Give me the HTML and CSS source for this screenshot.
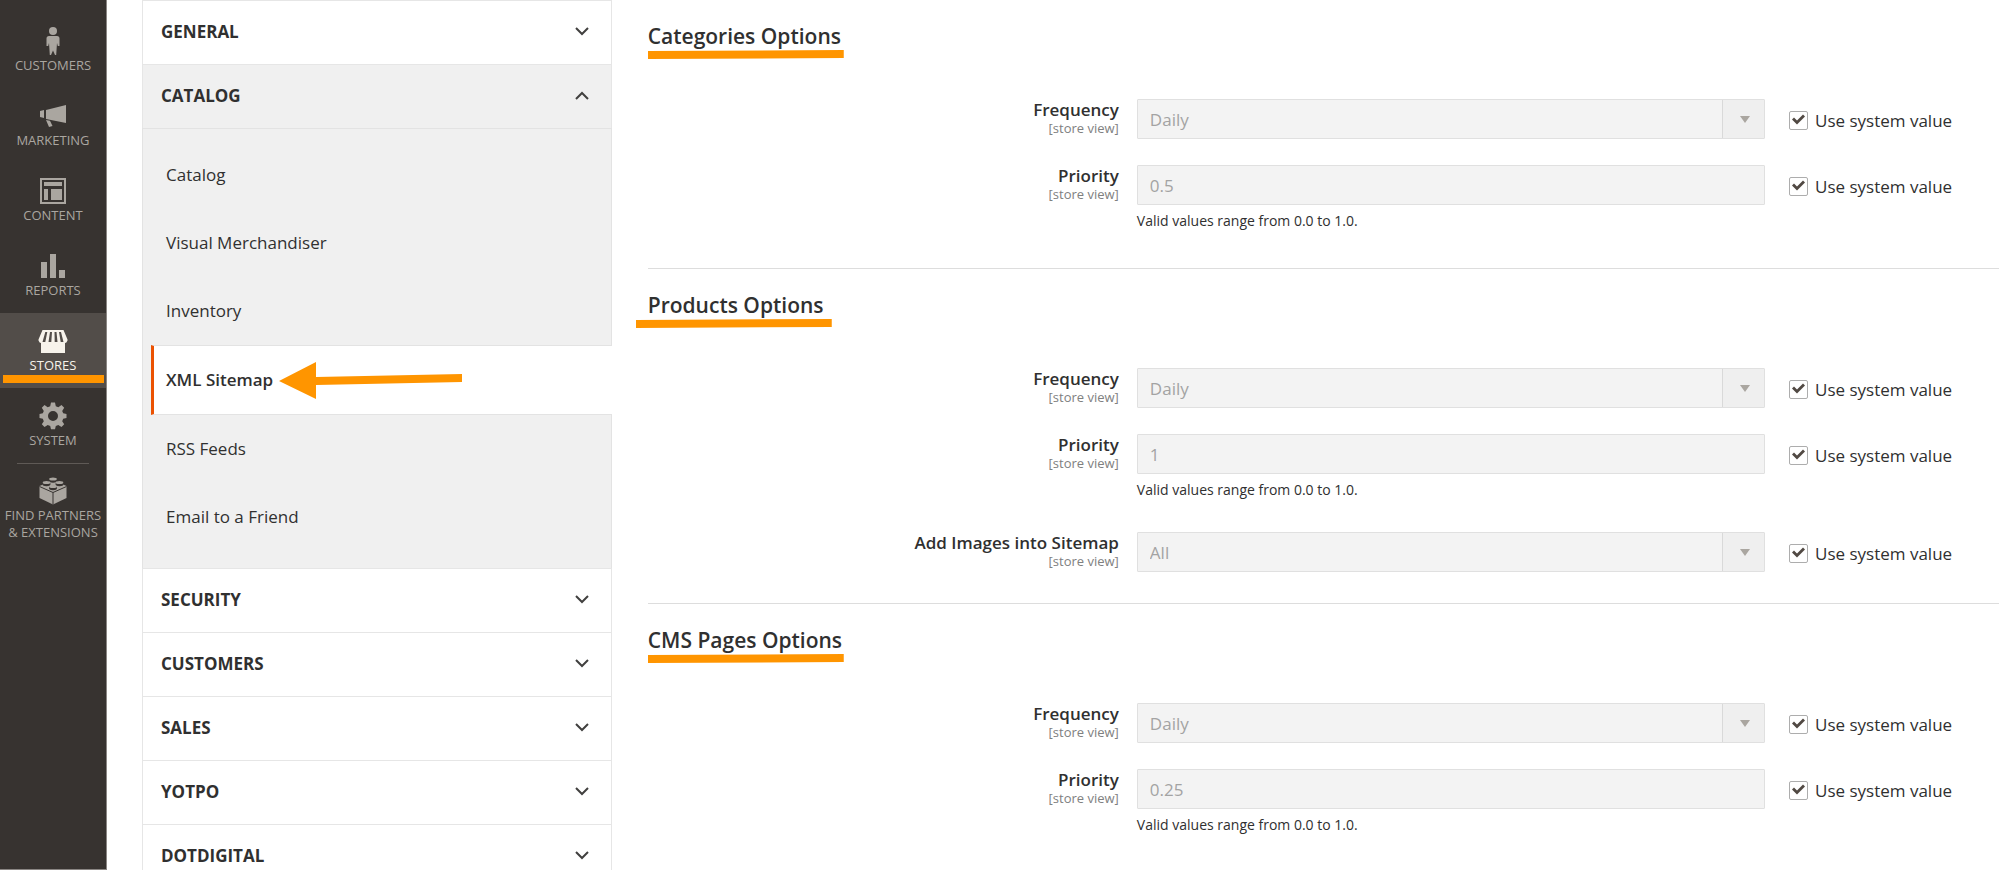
FILE: index.html
```html
<!DOCTYPE html>
<html lang="en">

<head>
    <meta charset="UTF-8">
    <meta name="viewport" content="width=device-width, initial-scale=1.0">
    <title>Configuration</title>
    <link rel="stylesheet" href="styles.css">
</head>

<body>
    <div class="page">
        <nav class="menu" aria-label="Main menu">
            <a href="#" class="menu-item">
                <svg class="menu-icon" width="28" height="28" viewBox="0 0 28 28">
                    <circle cx="14" cy="4" r="4" />
                    <path d="M10 9h8q2.500 0 2.500 2.500V19h-1.700l-.8-3-.8 12h-1.200L14 23.500 12 28h-1.200L10 16l-.8 3H7.500v-7.500Q7.500 9 10 9z" />
                </svg>
                <span>Customers</span>
            </a>
            <a href="#" class="menu-item">
                <svg class="menu-icon" width="28" height="28" viewBox="0 0 28 28">
                    <path d="M7 8 27 3v18L7 17zM1 9l4-1v8l-4-1zM7 18l4 .8L13.500 24l-3.500 1z" />
                </svg>
                <span>Marketing</span>
            </a>
            <a href="#" class="menu-item">
                <svg class="menu-icon" width="28" height="28" viewBox="0 0 28 28">
                    <path fill-rule="evenodd" d="M1 1h26v26H1zM3 3v22h22V3z" />
                    <path d="M5 5h18v4H5zM5 12h4v11H5zM12 12h11v11H12z" />
                </svg>
                <span>Content</span>
            </a>
            <a href="#" class="menu-item">
                <svg class="menu-icon" width="28" height="28" viewBox="0 0 28 28">
                    <path d="M2 10h6v16H2zM11 2h6v24h-6zM20 18h6v8h-6z" />
                </svg>
                <span>Reports</span>
            </a>
            <a href="#" class="menu-item active">
                <svg class="menu-icon" width="30" height="28" viewBox="0 0 30 28">
                    <path d="M4.500 3h21l4 9.500v1q-1 2.500-2.500 2.500V26H3V16Q1.500 16 .5 13.500v-1z" />
                    <path class="cut" d="M7.300 5h2L7.300 15H4.500zM12 5h2l-.7 10h-2.800zM16.500 5h2l1 10h-2.800zM21 5h2l2.500 10h-2.800z" />
                </svg>
                <span>Stores</span>
            </a>
            <a href="#" class="menu-item">
                <svg class="menu-icon" width="28" height="28" viewBox="0 0 28 28">
                    <path fill-rule="evenodd" d="M12 .5h4l.8 3.700 2.500 1L22.500 3l2.700 2.700-2 3.200 1 2.400 3.300.7v4l-3.300.7-1 2.500 2 3.100-2.700 2.700-3.200-2-2.500 1-.8 3.200h-4l-.8-3.200-2.500-1-3.200 2-2.700-2.700 2-3.100-1-2.500L.5 16v-4l3.300-.7 1-2.400-2-3.200L5.500 3l3.200 2.200 2.500-1zM14 9a5 5 0 1 0 0 10 5 5 0 0 0 0-10z" />
                </svg>
                <span>System</span>
            </a>
            <a href="#" class="menu-item partners">
                <svg class="menu-icon" width="28" height="28" viewBox="0 0 28 28">
                    <path d="M.5 9 14 3l13.500 6v12L14 27.500.5 21z" />
                    <path class="line" d="M.5 9.500 14 15.500l13.500-6M14 15.500v12" />
                    <g class="shade">
                        <ellipse cx="14" cy="3.500" rx="4" ry="2.200" />
                        <ellipse cx="7.500" cy="7" rx="4" ry="2.200" />
                        <ellipse cx="20.500" cy="7" rx="4" ry="2.200" />
                        <ellipse cx="14" cy="11" rx="4" ry="2.200" />
                    </g>
                    <ellipse cx="14" cy="2" rx="3.800" ry="1.500" />
                    <ellipse cx="7.500" cy="5.500" rx="3.800" ry="1.500" />
                    <ellipse cx="20.500" cy="5.500" rx="3.800" ry="1.500" />
                    <ellipse cx="14" cy="9.500" rx="3.800" ry="1.500" />
                </svg>
                <span>Find Partners<br>&amp; Extensions</span>
            </a>
        </nav>

        <nav class="config-nav" aria-label="Configuration">
            <button type="button" class="nav-title">General
                <svg width="14" height="9" viewBox="0 0 14 9"><path d="M1 1l6 6 6-6" /></svg>
            </button>
            <button type="button" class="nav-title open" aria-expanded="true">Catalog
                <svg width="14" height="9" viewBox="0 0 14 9"><path d="M1 8l6-6 6 6" /></svg>
            </button>
            <ul class="nav-items">
                <li><a href="#">Catalog</a></li>
                <li><a href="#">Visual Merchandiser</a></li>
                <li><a href="#">Inventory</a></li>
                <li class="current">
                    <a href="#">XML Sitemap</a>
                    <svg class="arrow" width="184" height="38" viewBox="0 0 184 38">
                        <path d="M0 19 37 0v15l146-3v8L37 23v14z" />
                    </svg>
                </li>
                <li><a href="#">RSS Feeds</a></li>
                <li><a href="#">Email to a Friend</a></li>
            </ul>
            <button type="button" class="nav-title">Security
                <svg width="14" height="9" viewBox="0 0 14 9"><path d="M1 1l6 6 6-6" /></svg>
            </button>
            <button type="button" class="nav-title">Customers
                <svg width="14" height="9" viewBox="0 0 14 9"><path d="M1 1l6 6 6-6" /></svg>
            </button>
            <button type="button" class="nav-title">Sales
                <svg width="14" height="9" viewBox="0 0 14 9"><path d="M1 1l6 6 6-6" /></svg>
            </button>
            <button type="button" class="nav-title">Yotpo
                <svg width="14" height="9" viewBox="0 0 14 9"><path d="M1 1l6 6 6-6" /></svg>
            </button>
            <button type="button" class="nav-title">Dotdigital
                <svg width="14" height="9" viewBox="0 0 14 9"><path d="M1 1l6 6 6-6" /></svg>
            </button>
        </nav>

        <main class="config">
            <section class="section">
                <h2>Categories Options</h2>
                <div class="row">
                    <label class="label" for="catFrequency">Frequency<span>[store view]</span></label>
                    <div class="select">
                        <select id="catFrequency" disabled><option>Daily</option></select>
                    </div>
                    <label class="default"><input type="checkbox" checked>Use system value</label>
                </div>
                <div class="row">
                    <label class="label" for="catPriority">Priority<span>[store view]</span></label>
                    <div>
                        <input type="text" id="catPriority" value="0.5" disabled>
                        <p class="note">Valid values range from 0.0 to 1.0.</p>
                    </div>
                    <label class="default"><input type="checkbox" checked>Use system value</label>
                </div>
            </section>

            <section class="section">
                <h2 class="wide">Products Options</h2>
                <div class="row">
                    <label class="label" for="prodFrequency">Frequency<span>[store view]</span></label>
                    <div class="select">
                        <select id="prodFrequency" disabled><option>Daily</option></select>
                    </div>
                    <label class="default"><input type="checkbox" checked>Use system value</label>
                </div>
                <div class="row">
                    <label class="label" for="prodPriority">Priority<span>[store view]</span></label>
                    <div>
                        <input type="text" id="prodPriority" value="1" disabled>
                        <p class="note">Valid values range from 0.0 to 1.0.</p>
                    </div>
                    <label class="default"><input type="checkbox" checked>Use system value</label>
                </div>
                <div class="row">
                    <label class="label" for="prodImages">Add Images into Sitemap<span>[store view]</span></label>
                    <div class="select">
                        <select id="prodImages" disabled><option>All</option></select>
                    </div>
                    <label class="default"><input type="checkbox" checked>Use system value</label>
                </div>
            </section>

            <section class="section">
                <h2>CMS Pages Options</h2>
                <div class="row">
                    <label class="label" for="cmsFrequency">Frequency<span>[store view]</span></label>
                    <div class="select">
                        <select id="cmsFrequency" disabled><option>Daily</option></select>
                    </div>
                    <label class="default"><input type="checkbox" checked>Use system value</label>
                </div>
                <div class="row">
                    <label class="label" for="cmsPriority">Priority<span>[store view]</span></label>
                    <div>
                        <input type="text" id="cmsPriority" value="0.25" disabled>
                        <p class="note">Valid values range from 0.0 to 1.0.</p>
                    </div>
                    <label class="default"><input type="checkbox" checked>Use system value</label>
                </div>
            </section>
        </main>
    </div>
</body>

</html>
```

FILE: styles.css
```css
* {
    box-sizing: border-box;
}

body {
    margin: 0;
    font-family: "Open Sans", "Noto Sans", sans-serif;
    font-size: 17px;
    color: #303030;
    background-color: #ffffff;
}

.page {
    display: flex;
    height: 100vh;
    overflow: hidden;
}

a {
    color: inherit;
    text-decoration: none;
}

/* Dark main menu */
.menu {
    flex: none;
    width: 107px;
    padding-top: 13px;
    background-color: #373330;
    border-right: 1px solid #8a8683;
    border-bottom: 1px solid #8a8683;
}

.menu-item {
    position: relative;
    display: flex;
    flex-direction: column;
    align-items: center;
    height: 75px;
    padding-top: 14px;
    font-size: 13px;
    line-height: 17px;
    text-align: center;
    text-transform: uppercase;
    white-space: nowrap;
    color: #aaa6a0;
}

.menu-icon {
    fill: currentColor;
    margin-bottom: 2px;
}

.menu-item.active {
    background-color: #524d49;
    color: #f7f3eb;
}

.menu-item.active::after {
    content: '';
    position: absolute;
    left: 3px;
    right: 2px;
    bottom: 5px;
    height: 8px;
    background-color: #ff9500;
}

.menu-icon .cut {
    fill: #524d49;
}

.menu-icon .line {
    fill: none;
    stroke: #373330;
    stroke-width: 1;
}

.menu-icon .shade {
    fill: #373330;
}

.menu-item.partners {
    height: auto;
}

.menu-item.partners::before {
    content: '';
    position: absolute;
    top: 0;
    left: 17px;
    right: 17px;
    height: 1px;
    background-color: #5f5a56;
}

/* Configuration sections */
.config-nav {
    flex: none;
    width: 23.5%;
    margin-left: 35px;
}

.nav-title {
    display: flex;
    align-items: center;
    justify-content: space-between;
    width: 100%;
    height: 64px;
    padding: 0 22px 2px 18px;
    border: 1px solid #e6e6e6;
    border-bottom: none;
    background-color: #ffffff;
    font-family: inherit;
    font-size: 17px;
    font-weight: 700;
    text-transform: uppercase;
    color: #303030;
    cursor: pointer;
}

.nav-title.open {
    background-color: #f0f0f0;
}

.nav-title svg {
    fill: none;
    stroke: #41403f;
    stroke-width: 2;
}

.nav-items {
    margin: 0;
    padding: 12px 0 17px 8px;
    list-style: none;
    background-color: #f0f0f0;
    border: 1px solid #e3e3e3;
    border-width: 1px 1px 0;
}

.nav-items li {
    position: relative;
    height: 68px;
    padding-left: 15px;
    line-height: 68px;
}

.nav-items .current {
    height: 70px;
    margin-right: -1px;
    padding-left: 12px;
    background-color: #ffffff;
    border: 1px solid #e3e3e3;
    border-left: 3px solid #eb5202;
    border-right: none;
    font-weight: 600;
}

.arrow {
    position: absolute;
    top: 16px;
    left: 125px;
    fill: #ff9500;
}

/* Settings form */
.config {
    flex: 1;
    min-width: 0;
    margin-left: 36px;
}

.section {
    padding: 22px 0 5px;
    border-top: 1px solid #dddddd;
}

.section:first-child {
    border-top: none;
}

h2 {
    position: relative;
    margin: 0 0 49px;
    font-size: 21px;
    font-weight: 600;
    line-height: 28px;
}

h2::after {
    content: '';
    position: absolute;
    top: 28px;
    left: 0;
    width: 196px;
    height: 9px;
    background-color: #ff9500;
    clip-path: polygon(0 1px, 100% 0, 100% 8px, 0 100%);
}

h2.wide::after {
    left: -12px;
}

.row {
    display: grid;
    grid-template-columns: 3fr 4fr 216px;
    column-gap: 18px;
    margin-bottom: 26px;
}

.label {
    text-align: right;
    font-weight: 600;
    line-height: 22px;
}

.label span {
    display: block;
    font-size: 13px;
    font-weight: 400;
    line-height: 14px;
    color: #808080;
}

input[type="text"],
select {
    display: block;
    width: 100%;
    height: 40px;
    padding: 0 12px;
    border: 1px solid #e0e0e0;
    border-radius: 1px;
    background-color: #f3f3f3;
    font-family: inherit;
    font-size: 17px;
    color: #a3a3a3;
    opacity: 1;
}

select {
    appearance: none;
}

.select {
    position: relative;
}

.select::before {
    content: '';
    position: absolute;
    top: 1px;
    right: 1px;
    width: 41px;
    height: 38px;
    border-left: 1px solid #d9d9d9;
    background-color: #efefef;
}

.select::after {
    content: '';
    position: absolute;
    top: 17px;
    right: 15px;
    border: 5px solid transparent;
    border-top: 7px solid #aaa6a0;
    border-bottom: none;
}

.note {
    margin: 6px 0 0;
    height: 26px;
    font-size: 14px;
    line-height: 20px;
}

.default {
    display: flex;
    align-items: center;
    gap: 7px;
    height: 40px;
    padding: 2px 0 0 6px;
    white-space: nowrap;
}

.default input {
    appearance: none;
    width: 19px;
    height: 19px;
    margin: 0;
    border: 1px solid #adadad;
    border-radius: 2px;
    background-color: #ffffff;
}

.default input:checked::before {
    content: '';
    display: block;
    width: 17px;
    height: 17px;
    background-color: #514943;
    clip-path: polygon(2px 8px, 4px 6px, 7px 9px, 13px 3px, 15px 5px, 7px 13px);
}
```
